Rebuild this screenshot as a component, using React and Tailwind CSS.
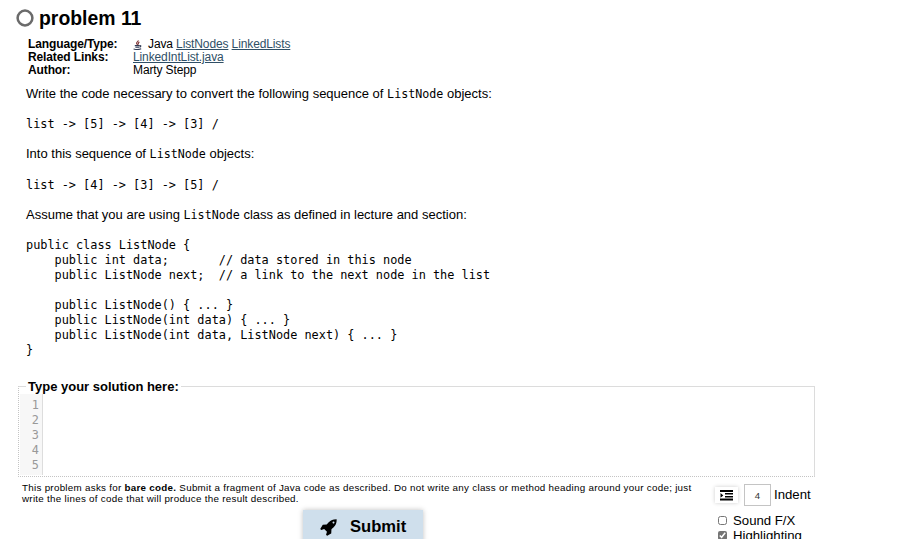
const lineNumbers = [1, 2, 3, 4, 5];

const listNodeClass = `public class ListNode {
    public int data;       // data stored in this node
    public ListNode next;  // a link to the next node in the list

    public ListNode() { ... }
    public ListNode(int data) { ... }
    public ListNode(int data, ListNode next) { ... }
}`;

const StatusRing = () => (
  <svg viewBox="0 0 18 18" className="mr-[5px] h-[18px] w-[18px]">
    <circle cx="9" cy="9" r="7.4" fill="none" stroke="#6b6b6b" strokeWidth="2.5" />
  </svg>
);

const JavaIcon = () => (
  <svg viewBox="0 0 9 10" className="mr-[6px] h-[10px] w-[9px]" fill="none">
    <path d="M5.2 0.3C5.6 1.7 3 2.2 3.6 3.6L4.6 5M6.4 2C4.8 2.8 4.9 3.4 5.5 4.6" stroke="#7c3030" strokeWidth="1.1" />
    <path d="M1.8 5.6H6.6M2.4 7.2H6.2M0.6 8.9C2.6 9.6 6 9.6 8.2 8.7M6.8 5.5C8.4 5.4 8 6.8 6.6 7.1" stroke="#303a55" strokeWidth="1.1" />
  </svg>
);

const IndentIcon = () => (
  <svg viewBox="0 0 13 11" className="h-[11px] w-[13px]" fill="#000000">
    <path d="M0 0h13v2H0zM5 3h8v1.5H5zM5 6h8v1.5H5zM0 8.5h13v2H0zM0.5 3v4.8L3.3 5.4z" />
  </svg>
);

const RocketIcon = () => (
  <svg viewBox="0 0 1792 1792" className="mb-px mr-[12px] h-[18px] w-[18px]" fill="#000000">
    <path d="M1440 448q0-40-28-68t-68-28-68 28-28 68 28 68 68 28 68-28 28-68zm224-288q0 249-75.5 430.5t-253.5 360.5q-81 80-195 176l-20 379q-2 16-16 26l-384 224q-7 4-16 4-12 0-23-9l-64-64q-13-14-8-32l85-276-281-281-276 85q-3 1-9 1-14 0-23-9l-64-64q-17-19-5-39l224-384q10-14 26-16l379-20q96-114 176-195 188-187 358-258t431-71q14 0 24 9.5t10 22.5z" />
  </svg>
);

const Code = ({ children }) => (
  <code className="font-['DejaVu_Sans_Mono',monospace] text-[11.7px] leading-none">
    {children}
  </code>
);

const Pre = ({ children }) => (
  <pre className="font-['DejaVu_Sans_Mono',monospace] text-[11.87px] leading-[15px]">
    {children}
  </pre>
);

const Link = ({ children }) => (
  <a href="#" className="text-[#2f4f66] underline">
    {children}
  </a>
);

const ProblemHeader = () => (
  <header>
    <h2 className="flex h-6 items-center text-[19.4px] font-bold leading-6">
      <StatusRing />
      problem 11
    </h2>
    <div className="ml-3 mt-2 grid grid-cols-[105px_auto] text-[12px] leading-[13px] tracking-[-0.12px]">
      <b>Language/Type:</b>
      <div className="flex items-center">
        <JavaIcon />
        <span>
          Java <Link>ListNodes</Link> <Link>LinkedLists</Link>
        </span>
      </div>
      <b>Related Links:</b>
      <div>
        <Link>LinkedIntList.java</Link>
      </div>
      <b>Author:</b>
      <div>Marty Stepp</div>
    </div>
  </header>
);

const Description = () => (
  <section className="ml-[10px] mt-[9px] text-[13px] leading-[15px]">
    <p>
      Write the code necessary to convert the following sequence of{" "}
      <Code>ListNode</Code> objects:
    </p>
    <div className="mb-[14px] mt-4">
      <Pre>{"list -> [5] -> [4] -> [3] /"}</Pre>
    </div>
    <p>
      Into this sequence of <Code>ListNode</Code> objects:
    </p>
    <div className="mb-[14px] mt-[17px]">
      <Pre>{"list -> [4] -> [3] -> [5] /"}</Pre>
    </div>
    <p>
      Assume that you are using <Code>ListNode</Code> class as defined in
      lecture and section:
    </p>
    <div className="mt-4">
      <Pre>{listNodeClass}</Pre>
    </div>
  </section>
);

const Editor = () => (
  <fieldset className="ml-[2px] mt-[21px] h-[98px] w-[797px] border border-dotted border-[#c4c4c4] border-r-[#dcdcdc] border-t-[#dcdcdc] [border-right-style:solid] [border-top-style:solid]">
    <legend className="ml-[7px] h-[15px] px-[2px] text-[13px] font-bold leading-[15px]">
      Type your solution here:
    </legend>
    <div className="ml-px h-[81px] w-[23px] border-r border-[#dddddd] bg-[#f7f7f7] pr-[3px] pt-[4px] text-right font-['DejaVu_Sans_Mono',monospace] text-[11.87px] leading-[15px] text-[#999999]">
      {lineNumbers.map((n) => (
        <div key={n}>{n}</div>
      ))}
    </div>
  </fieldset>
);

const Options = () => (
  <div className="mt-[7px] w-[110px] text-[13.2px]">
    <div className="flex items-center">
      <button className="flex h-4 w-[23px] items-center justify-center bg-white shadow-[0_0_4px_rgba(0,0,0,0.2)]">
        <IndentIcon />
      </button>
      <input
        defaultValue="4"
        className="ml-[6px] h-[22px] w-[27px] border border-[#c4c4c4] text-center text-[9.6px] text-[#333333]"
      />
      <span className="ml-[3px]">Indent</span>
    </div>
    <label className="mt-[7px] flex h-[15px] items-center leading-[15px]">
      <input type="checkbox" className="ml-[3px] mr-[6px] h-[9px] w-[9px]" />
      Sound F/X
    </label>
    <label className="flex h-[15px] items-center leading-[15px]">
      <input
        type="checkbox"
        defaultChecked
        className="ml-[3px] mr-[6px] h-[9px] w-[9px] accent-[#757575]"
      />
      Highlighting
    </label>
  </div>
);

export default function App() {
  return (
    <main className="h-[539px] overflow-hidden bg-white pl-4 pt-[6px] font-['Liberation_Sans',Arial,sans-serif] text-black">
      <ProblemHeader />
      <Description />
      <Editor />
      <div className="flex">
        <div className="ml-[6px] w-[693px] pt-[5px]">
          <p className="whitespace-nowrap text-[9.8px] leading-[11px] tracking-[0.28px]">
            This problem asks for <b>bare code.</b> Submit a fragment of Java
            code as described. Do not write any class or method heading around
            your code; just
            <br />
            write the lines of code that will produce the result described.
          </p>
          <button className="ml-[281px] mt-[6px] flex h-[35px] w-[120px] items-center bg-[#cfdfec] pl-[17px] text-[16.6px] font-bold shadow-[0_0_5px_rgba(0,0,0,0.25)]">
            <RocketIcon />
            Submit
          </button>
        </div>
        <Options />
      </div>
    </main>
  );
}
